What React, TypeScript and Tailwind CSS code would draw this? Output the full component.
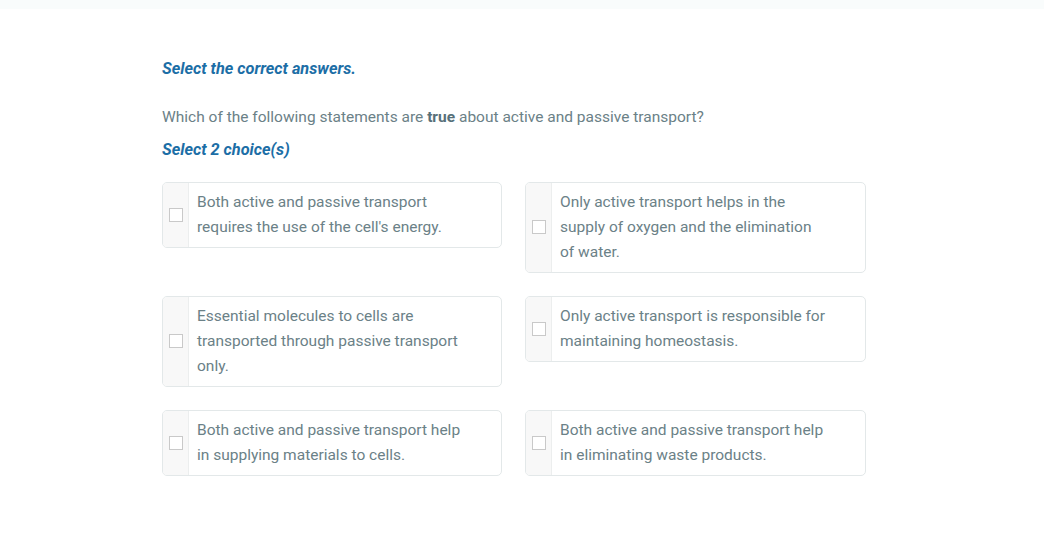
type Choice = { lines: string[] };

const choices: Choice[] = [
  { lines: ["Both active and passive transport", "requires the use of the cell's energy."] },
  { lines: ["Only active transport helps in the", "supply of oxygen and the elimination", "of water."] },
  { lines: ["Essential molecules to cells are", "transported through passive transport", "only."] },
  { lines: ["Only active transport is responsible for", "maintaining homeostasis."] },
  { lines: ["Both active and passive transport help", "in supplying materials to cells."] },
  { lines: ["Both active and passive transport help", "in eliminating waste products."] },
];

function ChoiceCard({ choice }: { choice: Choice }) {
  return (
    <label className="flex cursor-pointer overflow-hidden rounded-[5px] border border-[#e3e8e9] bg-white">
      <div className="flex w-[26px] shrink-0 items-center justify-center border-r border-[#eceeee] bg-[#f8f8f8]">
        <span className="h-[14px] w-[14px] border border-[#c9c9c9] bg-white" />
      </div>
      <div className="pt-[7px] pb-[6.5px] pl-[8px] pr-8 text-[15.5px] leading-[25px] text-[#6b8187]">
        {choice.lines.map((l, i) => (
          <div key={i} className="whitespace-nowrap">
            {l}
          </div>
        ))}
      </div>
    </label>
  );
}

export default function App() {
  return (
    <div className="min-h-[544px] bg-white font-['Roboto',sans-serif]">
      <div className="h-[9px] bg-[#f9fcfc]" />
      <div className="ml-[162px] w-[705px] pt-[50px]">
        <h2 className="text-[16.3px] font-bold italic leading-5 text-[#1c6ea6]">Select the correct answers.</h2>
        <p className="mt-[28px] text-[15.5px] leading-5 text-[#6b8187]">
          Which of the following statements are <b className="font-bold text-[#577079]">true</b> about active and
          passive transport?
        </p>
        <p className="mt-[13px] text-[16.3px] font-bold italic leading-5 text-[#1c6ea6]">Select 2 choice(s)</p>
        <div className="mt-[22px] grid grid-cols-[340px_341px] items-start gap-x-[23px] gap-y-[23.5px]">
          {choices.map((c, i) => (
            <ChoiceCard key={i} choice={c} />
          ))}
        </div>
      </div>
    </div>
  );
}
